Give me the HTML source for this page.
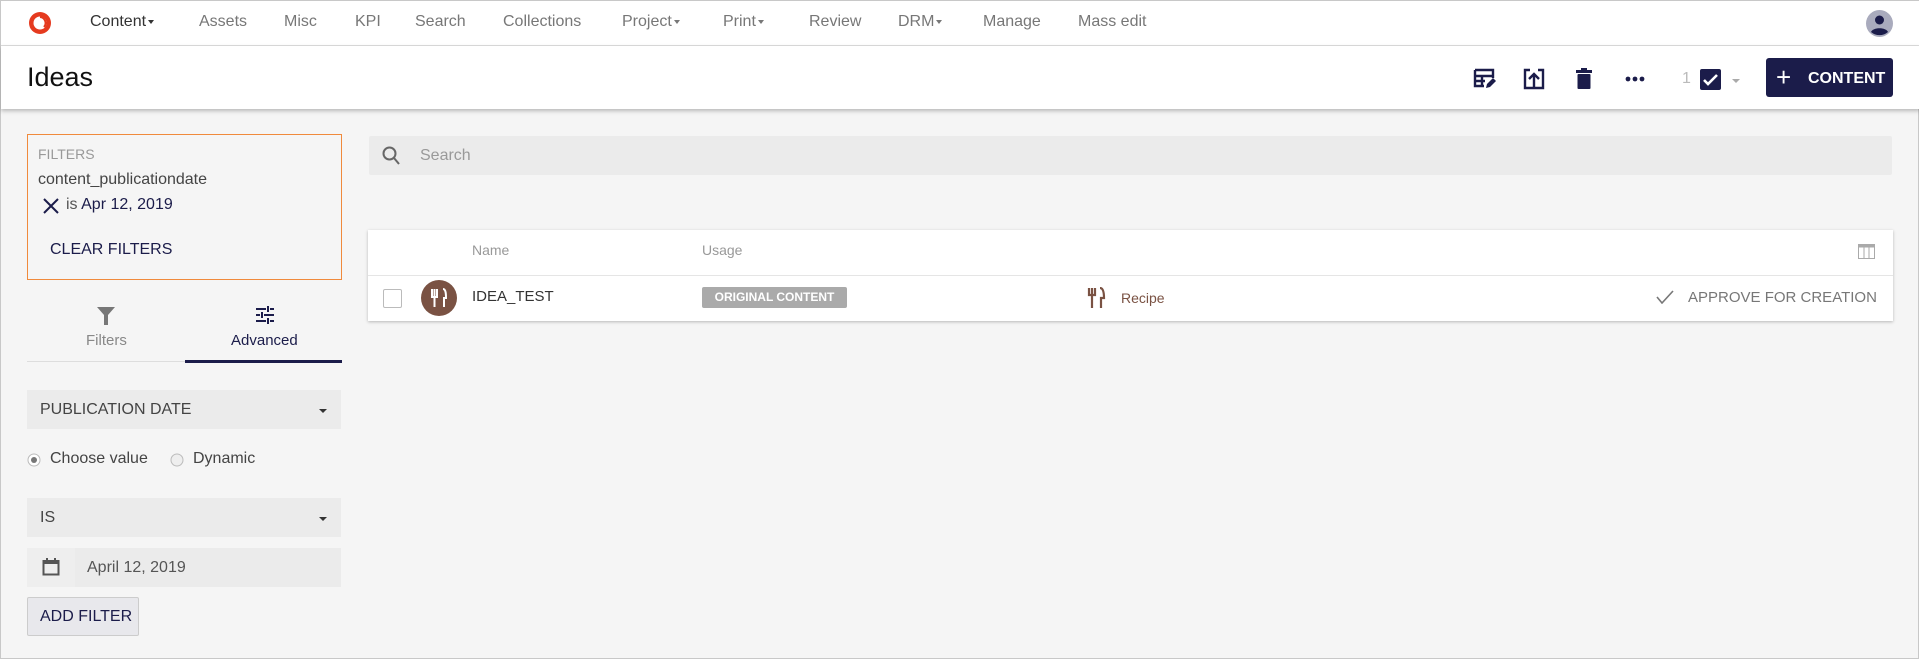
<!DOCTYPE html>
<html><head><meta charset="utf-8"><style>
*{box-sizing:border-box;margin:0;padding:0}
body{width:1919px;height:659px;overflow:hidden;background:#f5f5f5;font-family:"Liberation Sans",sans-serif;position:relative;border:1px solid #c8c8c8}
.abs{position:absolute}
.nav{left:0;top:0;width:1919px;height:45px;background:#fff;border-bottom:1px solid #ddd}
.nav span{position:absolute;top:12px;font-size:16px;color:#777}
.hdr{left:0;top:45px;width:1919px;height:63px;background:#fff;box-shadow:0 2px 4px rgba(0,0,0,.25)}
.car{display:inline-block;border-left:3px solid transparent;border-right:3px solid transparent;border-top:4px solid currentColor;vertical-align:middle;margin-left:2px}
.t{position:absolute;white-space:nowrap}
</style></head><body>
<div class="abs nav">
 <svg class="abs" style="left:26px;top:9px" width="26" height="26" viewBox="0 0 26 26"><circle cx="13" cy="13" r="11" fill="#e53a1f"/><circle cx="13" cy="13" r="6.5" fill="#fff"/><path d="M13 7a6 6 0 0 1 4 10" stroke="#e53a1f" stroke-width="2" fill="none"/></svg>
 <span style="left:89px;color:#333">Content<i class="car"></i></span>
 <span style="left:198px">Assets</span><span style="left:283px">Misc</span><span style="left:354px">KPI</span><span style="left:414px">Search</span><span style="left:502px">Collections</span><span style="left:621px">Project<i class="car"></i></span><span style="left:722px">Print<i class="car"></i></span><span style="left:808px">Review</span><span style="left:897px">DRM<i class="car"></i></span><span style="left:982px">Manage</span><span style="left:1077px">Mass edit</span>
 <svg class="abs" style="left:1865px;top:9px" width="27" height="27" viewBox="0 0 27 27"><circle cx="13.5" cy="13.5" r="13.5" fill="#a9abbd"/><circle cx="13.5" cy="10" r="4.5" fill="#1b1c4a"/><path d="M5 22c2-5 15-5 17 0a13 13 0 0 1-17 0z" fill="#1b1c4a"/></svg>
</div>
<div class="abs hdr">
 <div class="t" style="left:26px;top:16px;font-size:27px;color:#111">Ideas</div>
 <svg class="abs" style="left:1472px;top:22px" width="24" height="22" viewBox="0 0 24 22"><path d="M2 2h18v8M2 2v16h9M2 8h18M2 13h10M9 8v10" stroke="#1b1c4a" stroke-width="2.4" fill="none"/><path d="M13 20l1-4 6-6 3 3-6 6z" fill="#1b1c4a"/></svg>
 <svg class="abs" style="left:1522px;top:22px" width="22" height="22" viewBox="0 0 22 22"><path d="M7 2H2v18h18V2h-5M11 19V7M6 11l5-5 5 5" stroke="#1b1c4a" stroke-width="2.4" fill="none"/></svg>
 <svg class="abs" style="left:1575px;top:22px" width="16" height="21" viewBox="0 0 16 21"><rect x="0" y="2" width="16" height="3" fill="#1b1c4a"/><rect x="5" y="0" width="6" height="3" fill="#1b1c4a"/><rect x="1.5" y="6" width="13" height="15" rx="1" fill="#1b1c4a"/></svg>
 <svg class="abs" style="left:1624px;top:30px" width="20" height="6"><circle cx="3" cy="3" r="2.4" fill="#1b1c4a"/><circle cx="10" cy="3" r="2.4" fill="#1b1c4a"/><circle cx="17" cy="3" r="2.4" fill="#1b1c4a"/></svg>
 <div class="t" style="left:1681px;top:24px;font-size:16px;color:#bbb">1</div>
 <svg class="abs" style="left:1699px;top:23px" width="21" height="21" viewBox="0 0 21 21"><rect width="21" height="21" rx="2" fill="#1b1c4a"/><path d="M4 11l4 4 9-9" stroke="#fff" stroke-width="2.6" fill="none"/></svg>
 <i class="abs" style="left:1731px;top:33px;border-left:4px solid transparent;border-right:4px solid transparent;border-top:4px solid #aaa"></i>
 <div class="abs" style="left:1765px;top:12px;width:127px;height:39px;background:#1b1c4a;border-radius:3px;color:#fff;font-weight:bold;font-size:16px"><span class="t" style="left:10px;top:4px;font-size:26px;font-weight:normal">+</span><span class="t" style="left:42px;top:12px">CONTENT</span></div>
</div>
<!-- filters -->
<div class="abs" style="left:26px;top:133px;width:315px;height:146px;border:1px solid #f08a3c">
 <div class="t" style="left:10px;top:11px;font-size:14px;color:#999">FILTERS</div>
 <div class="t" style="left:10px;top:36px;font-size:16px;color:#444">content_publicationdate</div>
 <svg class="abs" style="left:15px;top:63px" width="16" height="16"><path d="M1 1l14 14M15 1L1 15" stroke="#1b1c4a" stroke-width="2"/></svg>
 <div class="t" style="left:38px;top:61px;font-size:16px;color:#555">is <span style="color:#1b1c4a">Apr 12, 2019</span></div>
 <div class="t" style="left:22px;top:106px;font-size:16px;color:#1b1c4a">CLEAR FILTERS</div>
</div>
<svg class="abs" style="left:95px;top:305px" width="20" height="20" viewBox="0 0 20 20"><path d="M1 1h18l-7 8v10h-4V9z" fill="#777"/></svg>
<div class="t" style="left:85px;top:331px;font-size:15px;color:#888">Filters</div>
<svg class="abs" style="left:254px;top:305px" width="20" height="18" viewBox="0 0 20 18"><path d="M1 3h10M15 3h4M13 0v6M1 9h4M9 9h10M7 6v6M1 15h10M15 15h4M13 12v6" stroke="#1b1c4a" stroke-width="2"/></svg>
<div class="t" style="left:230px;top:331px;font-size:15px;color:#1b1c4a">Advanced</div>
<div class="abs" style="left:26px;top:360px;width:315px;height:1px;background:#ddd"></div>
<div class="abs" style="left:184px;top:359px;width:157px;height:3px;background:#1b1c4a"></div>
<div class="abs" style="left:26px;top:389px;width:314px;height:39px;background:#ebebeb"><span class="t" style="left:13px;top:11px;font-size:16px;color:#444">PUBLICATION DATE</span><i class="abs" style="left:292px;top:19px;border-left:4px solid transparent;border-right:4px solid transparent;border-top:4px solid #333"></i></div>
<svg class="abs" style="left:26px;top:452px" width="14" height="14"><circle cx="7" cy="7" r="6" fill="#fff" stroke="#bbb"/><circle cx="7" cy="7" r="3" fill="#777"/></svg>
<div class="t" style="left:49px;top:449px;font-size:16px;color:#444">Choose value</div>
<svg class="abs" style="left:169px;top:452px" width="14" height="14"><circle cx="7" cy="7" r="6" fill="#eee" stroke="#bbb"/></svg>
<div class="t" style="left:192px;top:449px;font-size:16px;color:#444">Dynamic</div>
<div class="abs" style="left:26px;top:497px;width:314px;height:39px;background:#ebebeb"><span class="t" style="left:13px;top:11px;font-size:16px;color:#444">IS</span><i class="abs" style="left:292px;top:19px;border-left:4px solid transparent;border-right:4px solid transparent;border-top:4px solid #333"></i></div>
<div class="abs" style="left:26px;top:547px;width:314px;height:39px;background:#eee"></div>
<div class="abs" style="left:74px;top:547px;width:266px;height:39px;background:#ebebeb"><span class="t" style="left:12px;top:11px;font-size:16px;color:#555">April 12, 2019</span></div>
<svg class="abs" style="left:41px;top:557px" width="18" height="18" viewBox="0 0 18 18"><rect x="1.5" y="3" width="15" height="13.5" fill="none" stroke="#555" stroke-width="2"/><rect x="1.5" y="3" width="15" height="3" fill="#555"/><path d="M5 0v4M13 0v4" stroke="#555" stroke-width="2"/></svg>
<div class="abs" style="left:26px;top:596px;width:112px;height:39px;background:#e8e8ec;border:1px solid #ccc;border-radius:2px"><span class="t" style="left:12px;top:10px;font-size:16px;color:#1b1c4a">ADD FILTER</span></div>
<!-- search -->
<div class="abs" style="left:368px;top:135px;width:1523px;height:39px;background:#ebebeb;border-radius:2px"><svg class="abs" style="left:13px;top:10px" width="18" height="20"><circle cx="7.5" cy="7.5" r="6" fill="none" stroke="#666" stroke-width="2"/><path d="M12 12l5 6" stroke="#666" stroke-width="2"/></svg><span class="t" style="left:51px;top:11px;font-size:16px;color:#999">Search</span></div>
<!-- table -->
<div class="abs" style="left:367px;top:229px;width:1525px;height:91px;background:#fff;box-shadow:0 1px 3px rgba(0,0,0,.25)">
 <div class="t" style="left:104px;top:12px;font-size:14px;color:#999">Name</div>
 <div class="t" style="left:334px;top:12px;font-size:14px;color:#999">Usage</div>
 <svg class="abs" style="left:1490px;top:14px" width="17" height="15"><rect x=".5" y=".5" width="16" height="14" fill="none" stroke="#aaa"/><rect x=".5" y=".5" width="16" height="3" fill="#aaa"/><path d="M6 3v12M11 3v12" stroke="#aaa"/></svg>
 <div class="abs" style="left:0;top:45px;width:1525px;height:1px;background:#e5e5e5"></div>
 <div class="abs" style="left:15px;top:59px;width:19px;height:19px;border:1.5px solid #bbb;border-radius:2px"></div>
 <svg class="abs" style="left:53px;top:50px" width="36" height="36" viewBox="0 0 36 36"><circle cx="18" cy="18" r="18" fill="#7a5243"/><path d="M11 9v8h5V9M13.5 9v18M22 9c3 0 3 6 3 9h-2v9" stroke="#fff" stroke-width="2" fill="none"/></svg>
 <div class="t" style="left:104px;top:58px;font-size:15px;color:#333">IDEA_TEST</div>
 <div class="abs" style="left:334px;top:57px;width:145px;height:21px;background:#aaa;border-radius:2px;color:#fff;font-size:12px;font-weight:bold;text-align:center;line-height:21px;white-space:nowrap">ORIGINAL CONTENT</div>
 <svg class="abs" style="left:719px;top:57px" width="20" height="22" viewBox="0 0 20 22"><path d="M2 1v7h6V1M5 1v20M13 1c4 0 4 8 4 10h-3v10" stroke="#7a5243" stroke-width="2.2" fill="none"/></svg>
 <div class="t" style="left:753px;top:60px;font-size:14px;color:#7a5243">Recipe</div>
 <svg class="abs" style="left:1288px;top:60px" width="18" height="14"><path d="M1 7l5 6L17 1" stroke="#777" stroke-width="1.6" fill="none"/></svg>
 <div class="t" style="left:1320px;top:59px;font-size:15px;color:#777">APPROVE FOR CREATION</div>
</div>
</body></html>
